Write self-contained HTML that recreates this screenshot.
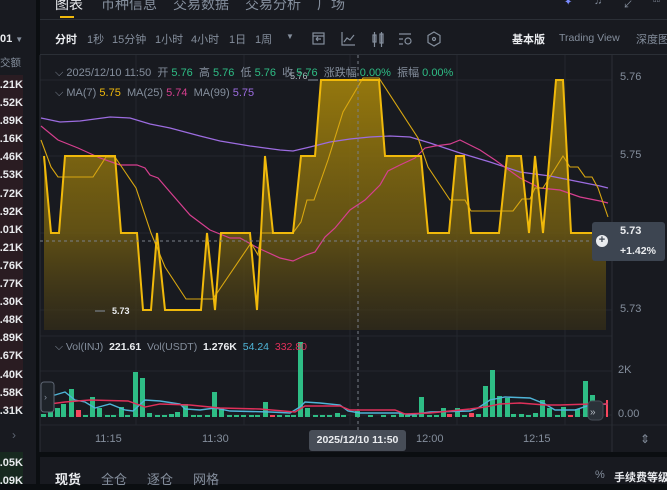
<!DOCTYPE html>
<html><head><meta charset="utf-8"><style>
*{margin:0;padding:0;box-sizing:border-box}
body{width:667px;height:484px;overflow:hidden;background:#0b0e11;font-family:"Liberation Sans","Noto Sans CJK SC",sans-serif;position:relative;color:#eaecef}
.a{position:absolute;white-space:nowrap}
</style></head><body>
<div class="a" style="left:0;top:0;width:36px;height:484px;background:#181a20"></div>
<div class="a" style="left:0;top:75px;width:23px;height:334px;background:#2a1c22"></div>
<div class="a" style="left:0;top:452px;width:23px;height:32px;background:#17291f"></div>
<div class="a" style="left:0;top:33px;font-size:11px;color:#eaecef;font-weight:bold">01 <span style="color:#848e9c;font-size:8px">▼</span></div>
<div class="a" style="left:0;top:55px;font-size:10.5px;color:#848e9c">交额</div>
<div class="a" style="left:-4px;top:76px;font-size:11px;font-weight:bold;line-height:18.1px;text-align:right;width:27px;color:#eaecef;overflow:hidden">
.21K<br>.52K<br>.89K<br>.16K<br>.46K<br>.53K<br>.72K<br>.92K<br>.01K<br>.21K<br>.76K<br>.77K<br>.30K<br>.48K<br>.89K<br>.67K<br>.40K<br>.58K<br>.31K</div>
<div class="a" style="left:12px;top:428px;font-size:12px;color:#5e6673">›</div>
<div class="a" style="left:-4px;top:454px;font-size:11px;font-weight:bold;line-height:18px;text-align:right;width:27px;color:#eaecef">.05K<br>.09K</div>

<div class="a" style="left:40px;top:0;width:627px;height:452px;background:#181a20"></div>
<div class="a" style="left:40px;top:19px;width:627px;height:1px;background:#2b2f36"></div>
<div class="a" style="left:55px;top:-6px;font-size:14px;color:#eaecef">图表</div>
<div class="a" style="left:60px;top:16px;width:14px;height:2px;background:#f0b90b"></div>
<div class="a" style="left:101px;top:-6px;font-size:14px;color:#848e9c">币种信息</div>
<div class="a" style="left:173px;top:-6px;font-size:14px;color:#848e9c">交易数据</div>
<div class="a" style="left:245px;top:-6px;font-size:14px;color:#848e9c">交易分析</div>
<div class="a" style="left:317px;top:-6px;font-size:14px;color:#848e9c">广场</div>
<div class="a" style="left:564px;top:-3px;font-size:10px;color:#7b8cff">✦</div>
<div class="a" style="left:594px;top:-5px;font-size:11px;color:#848e9c">♫</div>
<div class="a" style="left:623px;top:-4px;font-size:10px;color:#848e9c">↙</div>
<div class="a" style="left:653px;top:-4px;font-size:10px;color:#848e9c">▫▫</div>

<div class="a" style="left:55px;top:31px;font-size:11px;color:#eaecef;font-weight:bold">分时</div>
<div class="a" style="left:87px;top:31px;font-size:11px;color:#848e9c">1秒</div>
<div class="a" style="left:112px;top:31px;font-size:11px;color:#848e9c">15分钟</div>
<div class="a" style="left:155px;top:31px;font-size:11px;color:#848e9c">1小时</div>
<div class="a" style="left:191px;top:31px;font-size:11px;color:#848e9c">4小时</div>
<div class="a" style="left:229px;top:31px;font-size:11px;color:#848e9c">1日</div>
<div class="a" style="left:255px;top:31px;font-size:11px;color:#848e9c">1周</div>
<div class="a" style="left:286px;top:32px;font-size:8px;color:#848e9c">▼</div>
<svg class="a" style="left:310px;top:30px" width="140" height="18" fill="none" stroke="#848e9c" stroke-width="1.2">
<rect x="3" y="3" width="11" height="11"/><path d="M3 6h11M6 9h5M6 9l2-2M6 9l2 2"/>
<path d="M32 2v13h13M34 12l3-4 3 2 4-5"/>
<rect x="63" y="5" width="3" height="7"/><rect x="70" y="4" width="3" height="9"/><path d="M64.5 2v15M71.5 2v15"/>
<path d="M89 4h12M89 9h4M89 14h4"/><circle cx="98" cy="11" r="3"/>
<path d="M124 2l6 3.5v7L124 16l-6-3.5v-7z"/><circle cx="124" cy="9" r="1.5"/>
</svg>
<div class="a" style="left:512px;top:31px;font-size:11px;color:#eaecef;font-weight:bold">基本版</div>
<div class="a" style="left:559px;top:32px;font-size:10.5px;color:#848e9c">Trading View</div>
<div class="a" style="left:636px;top:31px;font-size:11px;color:#848e9c">深度图</div>
<div class="a" style="left:40px;top:54px;width:627px;height:1px;background:#2b2f36"></div>

<svg class="a" style="left:0;top:0" width="667" height="484">
<defs><linearGradient id="g" x1="0" y1="0" x2="0" y2="1">
<stop offset="0" stop-color="#9b7c0c" stop-opacity="0.95"/><stop offset="0.6" stop-color="#6e5a12" stop-opacity="0.85"/><stop offset="1" stop-color="#3a3117" stop-opacity="0.6"/></linearGradient></defs>
<g stroke="#23272e" stroke-width="1">
<path d="M40 80H612M40 156H612M40 233H612M40 310H612M40 371H612M40 415H612"/>
<path d="M136 55V425M244 55V425M350 55V425M457 55V425M565 55V425"/>
<path d="M40 336H612M40 425H667"/>
</g>
<path d="M40 55V452M612 55V452" stroke="#2b2f36"/>
<path d="M44 156L51 233L59 233L65 156L115 156L121 233L137 233L143 310L151 310L157 233L165 310L201 310L207 233L215 310L221 233L250 233L257 310L265 156L273 233L293 233L301 156L315 156L321 80L379 80L385 156L421 156L428 233L449 233L456 156L464 156L471 233L499 233L507 156L521 156L529 233L535 156L543 233L556 80L563 80L571 233L606 233L606 330L44 330Z" fill="url(#g)"/>
<path d="M41 118L60 122L80 121L110 117L130 118L150 124L170 128L200 136L220 141L250 146L265 148L280 150L293 151L310 147L330 142L350 139L370 137L390 136L410 137L430 143L460 153L490 162L520 172L550 176L580 182L600 186L608 188" fill="none" stroke="#9c6ce0" stroke-width="1.2"/>
<path d="M41 126L58 140L78 148L100 158L120 165L137 165L145 168L150 175L158 178L170 192L190 215L210 230L230 238L240 238L258 248L280 258L293 261L306 255L315 252L325 237L335 228L350 210L365 200L380 185L388 171L400 165L415 158L425 148L435 146L450 144L460 140L466 143L480 150L495 160L520 178L540 188L560 190L580 197L600 201L608 203" fill="none" stroke="#d63f8f" stroke-width="1.2"/>
<path d="M41 140L51 167L58 177L93 177L106 157L115 157L136 188L151 233L165 267L186 299L213 299L251 243L258 255L261 233L293 233L301 222L307 200L314 200L328 160L343 112L363 78L379 78L418 138L428 167L450 200L465 200L471 211L513 211L522 199L530 199L535 188L543 188L563 156L570 167L578 167L585 177L592 177L598 188L608 217" fill="none" stroke="#d9a710" stroke-width="1.1"/>
<path d="M44 156L51 233L59 233L65 156L115 156L121 233L137 233L143 310L151 310L157 233L165 310L201 310L207 233L215 310L221 233L250 233L257 310L265 156L273 233L293 233L301 156L315 156L321 80L379 80L385 156L421 156L428 233L449 233L456 156L464 156L471 233L499 233L507 156L521 156L529 233L535 156L543 233L556 80L563 80L571 233L606 233" fill="none" stroke="#f0b90b" stroke-width="2"/>
<path d="M40 241H606M358 55V430" stroke="#7a808a" stroke-dasharray="3 3" stroke-width="1"/>
<path d="M95 311H105M308 80H318" stroke="#848e9c"/>
<text x="112" y="314" font-size="9" fill="#eaecef" font-weight="bold" font-family="Liberation Sans">5.73</text>
<text x="290" y="79" font-size="9" fill="#b7bdc6" font-family="Liberation Sans">5.76</text>
<g fill="#2ebd85">
<rect x="41" y="414" width="5" height="3"/><rect x="48" y="412" width="5" height="5"/><rect x="55" y="408" width="5" height="9"/><rect x="61" y="404" width="5" height="13"/><rect x="69" y="389" width="5" height="28"/><rect x="83" y="415" width="5" height="2"/><rect x="90" y="397" width="5" height="20"/><rect x="97" y="408" width="5" height="9"/><rect x="105" y="415" width="5" height="2"/><rect x="111" y="415" width="5" height="2"/><rect x="119" y="407" width="5" height="10"/><rect x="125" y="415" width="5" height="2"/><rect x="133" y="372" width="5" height="45"/><rect x="140" y="378" width="5" height="39"/><rect x="147" y="413" width="5" height="4"/><rect x="155" y="415" width="5" height="2"/><rect x="162" y="415" width="5" height="2"/><rect x="169" y="414" width="5" height="3"/><rect x="175" y="412" width="5" height="5"/><rect x="183" y="404" width="5" height="13"/><rect x="191" y="415" width="5" height="2"/><rect x="197" y="415" width="5" height="2"/><rect x="205" y="415" width="5" height="2"/><rect x="212" y="392" width="5" height="25"/><rect x="219" y="408" width="5" height="9"/><rect x="227" y="415" width="5" height="2"/><rect x="234" y="415" width="5" height="2"/><rect x="241" y="415" width="5" height="2"/><rect x="249" y="415" width="5" height="2"/><rect x="255" y="415" width="5" height="2"/><rect x="263" y="402" width="5" height="15"/><rect x="277" y="415" width="5" height="2"/><rect x="285" y="415" width="5" height="2"/><rect x="291" y="415" width="5" height="2"/><rect x="298" y="342" width="5" height="75"/><rect x="305" y="408" width="5" height="9"/><rect x="313" y="415" width="5" height="2"/><rect x="320" y="415" width="5" height="2"/><rect x="327" y="415" width="5" height="2"/><rect x="335" y="413" width="5" height="4"/><rect x="341" y="415" width="5" height="2"/><rect x="355" y="411" width="5" height="6"/><rect x="368" y="415" width="5" height="2"/><rect x="381" y="415" width="5" height="2"/><rect x="391" y="415" width="5" height="2"/><rect x="399" y="413" width="5" height="4"/><rect x="405" y="415" width="5" height="2"/><rect x="412" y="415" width="5" height="2"/><rect x="419" y="397" width="5" height="20"/><rect x="427" y="415" width="5" height="2"/><rect x="434" y="415" width="5" height="2"/><rect x="441" y="408" width="5" height="9"/><rect x="455" y="408" width="5" height="9"/><rect x="462" y="415" width="5" height="2"/><rect x="476" y="414" width="5" height="3"/><rect x="483" y="386" width="5" height="31"/><rect x="490" y="370" width="5" height="47"/><rect x="497" y="396" width="5" height="21"/><rect x="505" y="398" width="5" height="19"/><rect x="511" y="414" width="5" height="3"/><rect x="519" y="414" width="5" height="3"/><rect x="526" y="415" width="5" height="2"/><rect x="533" y="413" width="5" height="4"/><rect x="540" y="400" width="5" height="17"/><rect x="547" y="408" width="5" height="9"/><rect x="555" y="415" width="5" height="2"/><rect x="561" y="407" width="5" height="10"/><rect x="575" y="409" width="5" height="8"/><rect x="583" y="381" width="5" height="36"/><rect x="590" y="395" width="5" height="22"/><rect x="597" y="410" width="5" height="7"/>
</g>
<g fill="#f6465d"><rect x="76" y="410" width="5" height="7"/><rect x="270" y="415" width="5" height="2"/><rect x="447" y="414" width="5" height="3"/><rect x="469" y="413" width="5" height="4"/><rect x="568" y="415" width="5" height="2"/><rect x="606" y="400" width="2" height="17"/></g>
<path d="M42 397L55 395L65 392L75 400L85 402L95 408L110 404L125 410L133 411L145 400L160 401L180 404L185 409L200 410L215 408L230 411L270 412L290 413L300 407L305 402L320 403L340 405L348 411L360 413L400 413L410 415L430 412L470 411L478 408L490 400L505 397L530 398L545 404L555 410L575 410L590 405L608 404" fill="none" stroke="#4fb5d8" stroke-width="1.4"/>
<path d="M42 405L65 402L90 400L128 401L145 407L160 404L190 405L220 408L260 409L295 412L305 406L340 406L350 410L395 410L405 414L430 413L450 411L470 409L485 407L500 404L520 403L545 405L560 405L590 404L608 404" fill="none" stroke="#e0305a" stroke-width="1.4"/>
<rect x="41" y="382" width="13" height="30" rx="3" fill="#1e2329" stroke="#5e6673"/>
<text x="44" y="400" font-size="9" fill="#848e9c">›</text>
<rect x="588" y="401" width="15" height="19" rx="4" fill="#2b3139" stroke="#474d57"/>
<text x="590" y="415" font-size="10" fill="#b7bdc6">»</text>
</svg>

<div class="a" style="left:55px;top:64px;font-size:11px;color:#848e9c">⌵ 2025/12/10 11:50 &nbsp;开 <span style="color:#2ebd85">5.76</span> &nbsp;高 <span style="color:#2ebd85">5.76</span> &nbsp;低 <span style="color:#2ebd85">5.76</span> &nbsp;收 <span style="color:#2ebd85">5.76</span> &nbsp;涨跌幅 <span style="color:#2ebd85">0.00%</span> &nbsp;振幅 <span style="color:#2ebd85">0.00%</span></div>
<div class="a" style="left:55px;top:87px;font-size:11px;color:#848e9c">⌵ MA(7) <span style="color:#f0b90b">5.75</span> &nbsp;MA(25) <span style="color:#d63f8f">5.74</span> &nbsp;MA(99) <span style="color:#9c6ce0">5.75</span></div>
<div class="a" style="left:55px;top:341px;font-size:10.5px;color:#848e9c">⌵ Vol(INJ) &nbsp;<b style="color:#eaecef">221.61</b> &nbsp;Vol(USDT) &nbsp;<b style="color:#eaecef">1.276K</b> &nbsp;<span style="color:#4fb5d8">54.24</span> &nbsp;<span style="color:#e0305a">332.80</span></div>
<div class="a" style="left:620px;top:71px;font-size:11px;color:#848e9c">5.76</div>
<div class="a" style="left:620px;top:149px;font-size:11px;color:#848e9c">5.75</div>
<div class="a" style="left:620px;top:303px;font-size:11px;color:#848e9c">5.73</div>
<div class="a" style="left:618px;top:364px;font-size:11px;color:#848e9c">2K</div>
<div class="a" style="left:618px;top:408px;font-size:11px;color:#848e9c">0.00</div>
<div class="a" style="left:592px;top:222px;width:73px;height:39px;background:#3d4551;border-radius:3px"></div>
<div class="a" style="left:596px;top:235px;width:12px;height:12px;border-radius:6px;background:#eaecef;color:#3d4551;font-size:11px;line-height:11px;text-align:center;font-weight:bold">+</div>
<div class="a" style="left:620px;top:225px;font-size:11px;color:#eaecef;font-weight:bold">5.73</div>
<div class="a" style="left:620px;top:245px;font-size:10.5px;color:#eaecef;font-weight:bold">+1.42%</div>
<div class="a" style="left:95px;top:433px;font-size:11px;color:#848e9c">11:15</div>
<div class="a" style="left:202px;top:433px;font-size:11px;color:#848e9c">11:30</div>
<div class="a" style="left:416px;top:433px;font-size:11px;color:#848e9c">12:00</div>
<div class="a" style="left:523px;top:433px;font-size:11px;color:#848e9c">12:15</div>
<div class="a" style="left:309px;top:430px;width:97px;height:21px;background:#474d57;border-radius:3px;font-size:10.5px;font-weight:bold;color:#eaecef;line-height:21px;text-align:center">2025/12/10 11:50</div>
<div class="a" style="left:640px;top:432px;font-size:12px;color:#848e9c">⇕</div>
<div class="a" style="left:40px;top:457px;width:627px;height:27px;background:#181a20"></div>
<div class="a" style="left:55px;top:469px;font-size:13px;color:#eaecef;font-weight:bold">现货</div>
<div class="a" style="left:101px;top:469px;font-size:13px;color:#848e9c">全仓</div>
<div class="a" style="left:147px;top:469px;font-size:13px;color:#848e9c">逐仓</div>
<div class="a" style="left:193px;top:469px;font-size:13px;color:#848e9c">网格</div>
<div class="a" style="left:595px;top:469px;font-size:11px;color:#848e9c">%</div>
<div class="a" style="left:614px;top:469px;font-size:11px;color:#eaecef;font-weight:bold">手续费等级</div>
</body></html>
